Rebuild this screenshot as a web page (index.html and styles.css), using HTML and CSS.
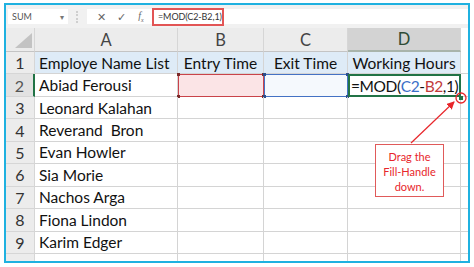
FILE: index.html
```html
<!DOCTYPE html>
<html>
<head>
<meta charset="utf-8">
<link rel="stylesheet" href="styles.css">
</head>
<body>
<div class="frame">
  <div class="fbar">
    <div class="namebox"><span class="nm">SUM</span><span class="dd">▾</span></div>
    <div class="sep"></div>
    <div class="finput">
      <span class="ic x">✕</span>
      <span class="ic ok">✓</span>
      <span class="ic fx">f<sub>x</sub></span>
      <div class="fbox">=MOD(C2-B2,1)</div>
    </div>
  </div>
  <div class="sheet">
    <div class="corner"><span class="tri"></span></div>
    <div class="ch">A</div>
    <div class="ch">B</div>
    <div class="ch">C</div>
    <div class="ch sel">D</div>
    <div class="ch blank"></div>

    <div class="rh">1</div>
    <div class="c hd left">Employe Name List</div>
    <div class="c hd">Entry Time</div>
    <div class="c hd">Exit Time</div>
    <div class="c hd">Working Hours</div>
    <div class="c e"></div>

    <div class="rh act">2</div>
    <div class="c left">Abiad Ferousi</div>
    <div class="c refb"><i class="k tl"></i><i class="k tr"></i><i class="k bl"></i><i class="k br"></i></div>
    <div class="c refc"><i class="k tl"></i><i class="k tr"></i><i class="k bl"></i><i class="k br"></i></div>
    <div class="c active">=MOD(<span class="blue">C2</span>-<span class="red">B2</span>,1)<span class="caret"></span></div>
    <div class="c e"></div>

    <div class="rh">3</div>
    <div class="c left">Leonard Kalahan</div>
    <div class="c"></div><div class="c"></div><div class="c"></div><div class="c e"></div>

    <div class="rh">4</div>
    <div class="c left">Reverand&nbsp; Bron</div>
    <div class="c"></div><div class="c"></div><div class="c"></div><div class="c e"></div>

    <div class="rh">5</div>
    <div class="c left">Evan Howler</div>
    <div class="c"></div><div class="c"></div><div class="c"></div><div class="c e"></div>

    <div class="rh">6</div>
    <div class="c left">Sia Morie</div>
    <div class="c"></div><div class="c"></div><div class="c"></div><div class="c e"></div>

    <div class="rh">7</div>
    <div class="c left">Nachos Arga</div>
    <div class="c"></div><div class="c"></div><div class="c"></div><div class="c e"></div>

    <div class="rh">8</div>
    <div class="c left">Fiona Lindon</div>
    <div class="c"></div><div class="c"></div><div class="c"></div><div class="c e"></div>

    <div class="rh">9</div>
    <div class="c left">Karim Edger</div>
    <div class="c"></div><div class="c"></div><div class="c"></div><div class="c e"></div>

    <div class="rh"></div>
    <div class="c"></div><div class="c"></div><div class="c"></div><div class="c"></div><div class="c e"></div>
  </div>

  <svg class="overlay" width="462" height="256" viewBox="0 0 462 256">
    <defs>
      <marker id="ah" markerWidth="8" markerHeight="8" refX="7" refY="4" orient="auto" markerUnits="userSpaceOnUse">
        <path d="M0,0 L8,4 L0,8 Z" fill="#e8262b"/>
      </marker>
    </defs>
    <line x1="405" y1="138" x2="448" y2="97" stroke="#e8262b" stroke-width="1.2" marker-end="url(#ah)"/>
    <circle cx="455" cy="93" r="5" fill="none" stroke="#e8262b" stroke-width="1.3"/>
    <rect x="453" y="91" width="4" height="4" fill="#217346"/>
  </svg>

  <div class="callout">Drag the<br>Fill-Handle<br>down.</div>
</div>
</body>
</html>
```

FILE: styles.css
```css
* { box-sizing: border-box; }
html, body { margin: 0; padding: 0; background: #ffffff; }
body { width: 474px; height: 267px; overflow: hidden; }

.frame {
  position: relative;
  margin: 3px 0 0 4px;
  width: 466px;
  height: 260px;
  border: 2px solid #1fb1e0;
  background: #ffffff;
  overflow: hidden;
  font-family: Lato, "Open Sans", sans-serif;
}

.fbar {
  height: 23px;
  background: #f1f1f1;
  display: flex;
  align-items: center;
  padding-left: 2px;
}
.namebox {
  width: 60px;
  height: 15px;
  background: #ffffff;
  display: flex;
  align-items: center;
  justify-content: space-between;
  padding: 0 4px 0 4px;
  font-size: 9px;
  color: #555;
}
.namebox .dd { font-size: 8px; color: #777; }
.sep {
  width: 2px;
  height: 12px;
  margin: 0 9px 0 8px;
  border-left: 2px dotted #cfcfcf;
}
.finput {
  flex: 1;
  height: 15px;
  background: #ffffff;
  display: flex;
  align-items: center;
  padding-left: 4px;
}
.ic { color: #666; font-size: 11px; width: 20px; text-align: center; }
.ic.fx { font-family: "Liberation Serif", serif; font-style: italic; font-size: 10px; }
.ic.fx sub { font-size: 6px; }
.fbox {
  margin-left: 1px;
  height: 18px;
  width: 72px;
  border: 2px solid #e25555;
  display: flex;
  align-items: center;
  padding-left: 4px;
  font-size: 9px;
  letter-spacing: -0.1px;
  white-space: nowrap;
  color: #333;
  background: #ffffff;
}

.sheet {
  display: grid;
  grid-template-columns: 29px 143px 86px 84px 113px 1fr;
  grid-template-rows: 24px repeat(9, 22.45px) 22px;
  font-size: 15.5px;
  color: #111;
}
.corner {
  background: #ececec;
  border-right: 1px solid #d6d6d6;
  border-bottom: 1px solid #c4c4c4;
  position: relative;
}
.tri {
  position: absolute;
  right: 2px;
  bottom: 3px;
  width: 0; height: 0;
  border-left: 17px solid transparent;
  border-bottom: 15px solid #c3c3c3;
}
.ch {
  background: #ececec;
  border-right: 1px solid #d6d6d6;
  border-bottom: 1px solid #c4c4c4;
  display: flex;
  align-items: center;
  justify-content: center;
  color: #444;
  font-size: 16.5px;
}
.ch.sel { background: #d3d3d3; border-bottom: 2px solid #a9b4ab; color: #2e4b36; }
.ch.blank { background: #ffffff; border: none; }

.rh {
  background: #ececec;
  border-right: 1px solid #d6d6d6;
  border-bottom: 1px solid #d6d6d6;
  display: flex;
  align-items: center;
  justify-content: center;
  color: #333;
  font-size: 16px;
}
.rh.act { border-right: 2px solid #217346; color: #555; background: #e2e2e2; }

.c {
  border-right: 1px solid #d4d4d4;
  border-bottom: 1px solid #d4d4d4;
  display: flex;
  align-items: center;
  justify-content: center;
  white-space: nowrap;
  position: relative;
}
.c.left { justify-content: flex-start; padding-left: 4px; }
.c.e { border-right: none; }
.c.hd { background: #deebf7; }

.refb { background: #fbe4e6; border: 1.5px solid #c9434a; }
.refc { background: #f5f9fd; border: 1.5px solid #4472c4; }
.k { position: absolute; width: 3px; height: 3px; background: #7a2a2a; }
.refc .k { background: #2d4f8c; }
.k.tl { left: -2px; top: -2px; }
.k.tr { right: -2px; top: -2px; }
.k.bl { left: -2px; bottom: -2px; }
.k.br { right: -2px; bottom: -2px; }

.active {
  border: 2px solid #217346;
  justify-content: flex-start;
  padding-left: 1px;
  font-size: 15.5px;
  letter-spacing: -0.4px;
  color: #111;
}
.blue { color: #3b6fc7; }
.red { color: #c23b3b; }
.caret { display: inline-block; width: 1px; height: 16px; background: #333; margin-left: 2px; }

.overlay { position: absolute; left: 0; top: 0; pointer-events: none; }

.callout {
  position: absolute;
  left: 369px;
  top: 139px;
  width: 69px;
  height: 53px;
  background: #ffffff;
  border: 1px solid #e05a5a;
  color: #e8262b;
  font-size: 11px;
  line-height: 15px;
  text-align: center;
  padding-top: 4px;
}
```
